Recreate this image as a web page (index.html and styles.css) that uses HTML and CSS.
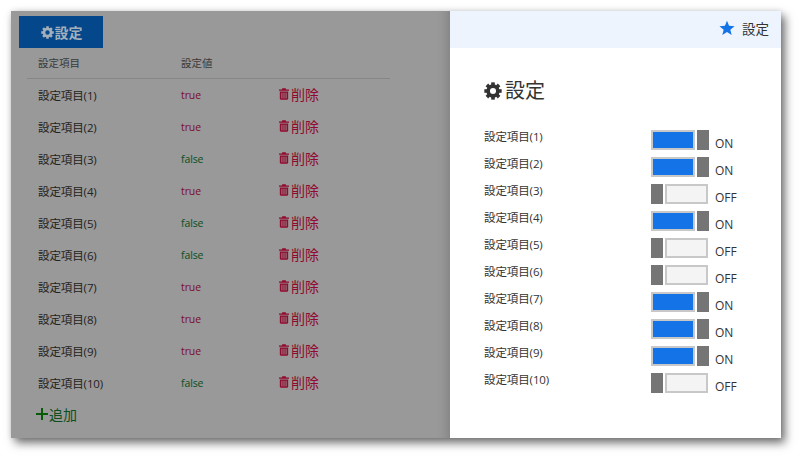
FILE: index.html
```html
<!DOCTYPE html>
<html lang="ja">
<head>
<meta charset="utf-8">
<title>設定</title>
<link rel="stylesheet" href="styles.css">
</head>
<body>
<svg class="defs" width="0" height="0" aria-hidden="true">
  <symbol id="gear" viewBox="0 0 16 16">
    <circle cx="8" cy="8" r="4.300" fill="none" stroke="currentColor" stroke-width="3.200"/>
    <g fill="currentColor">
      <rect x="6.400" y="0.300" width="3.200" height="3"/>
      <rect x="6.400" y="12.700" width="3.200" height="3"/>
      <rect x="0.300" y="6.400" width="3" height="3.200"/>
      <rect x="12.700" y="6.400" width="3" height="3.200"/>
      <rect x="6.400" y="0.300" width="3.200" height="3" transform="rotate(45 8 8)"/>
      <rect x="6.400" y="12.700" width="3.200" height="3" transform="rotate(45 8 8)"/>
      <rect x="0.300" y="6.400" width="3" height="3.200" transform="rotate(45 8 8)"/>
      <rect x="12.700" y="6.400" width="3" height="3.200" transform="rotate(45 8 8)"/>
    </g>
  </symbol>
  <symbol id="trash" viewBox="0 0 12 14">
    <path fill="currentColor" d="M4 0h4l.6 1.500H12V3H0V1.500h3.400zM1 4h10v9l-1 1H2l-1-1zM3 5.500v7h1v-7zM5.500 5.500v7h1v-7zM8 5.500v7h1v-7z"/>
  </symbol>
</svg>
<main class="window">
  <section class="list">
    <button class="open"><svg class="gear-s"><use href="#gear"/></svg>設定</button>
    <div class="thead"><span>設定項目</span><span>設定値</span></div>
    <div class="row"><span>設定項目(1)</span><span class="t">true</span><span class="del"><svg class="trash"><use href="#trash"/></svg>削除</span></div>
    <div class="row"><span>設定項目(2)</span><span class="t">true</span><span class="del"><svg class="trash"><use href="#trash"/></svg>削除</span></div>
    <div class="row"><span>設定項目(3)</span><span class="f">false</span><span class="del"><svg class="trash"><use href="#trash"/></svg>削除</span></div>
    <div class="row"><span>設定項目(4)</span><span class="t">true</span><span class="del"><svg class="trash"><use href="#trash"/></svg>削除</span></div>
    <div class="row"><span>設定項目(5)</span><span class="f">false</span><span class="del"><svg class="trash"><use href="#trash"/></svg>削除</span></div>
    <div class="row"><span>設定項目(6)</span><span class="f">false</span><span class="del"><svg class="trash"><use href="#trash"/></svg>削除</span></div>
    <div class="row"><span>設定項目(7)</span><span class="t">true</span><span class="del"><svg class="trash"><use href="#trash"/></svg>削除</span></div>
    <div class="row"><span>設定項目(8)</span><span class="t">true</span><span class="del"><svg class="trash"><use href="#trash"/></svg>削除</span></div>
    <div class="row"><span>設定項目(9)</span><span class="t">true</span><span class="del"><svg class="trash"><use href="#trash"/></svg>削除</span></div>
    <div class="row"><span>設定項目(10)</span><span class="f">false</span><span class="del"><svg class="trash"><use href="#trash"/></svg>削除</span></div>
    <div class="add"><svg class="plus" viewBox="0 0 12 12"><path fill="currentColor" d="M5 0h2v5h5v2H7v5H5V7H0V5h5z"/></svg>追加</div>
  </section>
  <aside class="panel">
    <header class="phead">
      <svg class="star" viewBox="0 0 24 24"><path fill="currentColor" d="M12 1l3.100 7.600 8.200.6-6.300 5.300 2 8-7-4.400-7 4.400 2-8L.7 9.200l8.200-.6z"/></svg>
      <span>設定</span>
    </header>
    <div class="pbody">
      <h1 class="title"><svg class="gear-l"><use href="#gear"/></svg>設定</h1>
      <div class="set"><span class="name">設定項目(1)</span><span class="sw on"><i></i><b></b></span><span class="st">ON</span></div>
      <div class="set"><span class="name">設定項目(2)</span><span class="sw on"><i></i><b></b></span><span class="st">ON</span></div>
      <div class="set"><span class="name">設定項目(3)</span><span class="sw"><b></b><i></i></span><span class="st">OFF</span></div>
      <div class="set"><span class="name">設定項目(4)</span><span class="sw on"><i></i><b></b></span><span class="st">ON</span></div>
      <div class="set"><span class="name">設定項目(5)</span><span class="sw"><b></b><i></i></span><span class="st">OFF</span></div>
      <div class="set"><span class="name">設定項目(6)</span><span class="sw"><b></b><i></i></span><span class="st">OFF</span></div>
      <div class="set"><span class="name">設定項目(7)</span><span class="sw on"><i></i><b></b></span><span class="st">ON</span></div>
      <div class="set"><span class="name">設定項目(8)</span><span class="sw on"><i></i><b></b></span><span class="st">ON</span></div>
      <div class="set"><span class="name">設定項目(9)</span><span class="sw on"><i></i><b></b></span><span class="st">ON</span></div>
      <div class="set"><span class="name">設定項目(10)</span><span class="sw"><b></b><i></i></span><span class="st">OFF</span></div>
    </div>
  </aside>
</main>
</body>
</html>
```
FILE: styles.css
```css
* { box-sizing: border-box; }
html, body { margin: 0; height: 100%; background: #fff; overflow: hidden; }
body { padding: 11px 0 0 11px; font-family: "Open Sans", "Noto Sans CJK JP", sans-serif; font-size: 11.500px; color: #333; }
.defs { position: absolute; }
.window { display: flex; width: 770px; height: 427px; background: #999; box-shadow: 4px 5px 9px rgba(0,0,0,.55), 0 0 6px rgba(0,0,0,.12); }

.list { width: 439px; padding: 5px 0 0 8px; color: #222; box-shadow: inset -14px 0 12px -12px rgba(0,0,0,.18); }
.open { display: flex; align-items: center; justify-content: center; width: 84px; height: 32px; border: 0; padding: 0 0 0 1px; background: #04478a; color: #a3afbb; font: 700 14px "Open Sans", "Noto Sans CJK JP", sans-serif; }
.gear-s { width: 13px; height: 13px; margin-right: 1px; }
.thead { display: grid; grid-template-columns: 143px 1fr; align-items: center; width: 363px; height: 31px; margin-left: 8px; padding: 0 0 1px 11px; border-bottom: 1px solid #868686; font-size: 10.500px; color: #3a3a3a; }
.row { display: grid; grid-template-columns: 143px 98px 1fr; align-items: center; height: 32px; margin-left: 19px; letter-spacing: -.1px; }
.t { color: #7a0c28; font-size: 10.500px; }
.f { color: #0a4f1e; font-size: 10.500px; }
.del { display: flex; align-items: center; padding-bottom: 2px; color: #900a2e; font-size: 14px; letter-spacing: 0; }
.trash { width: 10px; height: 12px; margin-right: 2px; }
.add { display: flex; align-items: center; height: 30px; margin: 0 0 0 17px; font-size: 14px; color: #0c5020; }
.plus { width: 12px; height: 12px; margin-right: 1px; color: #065c06; }

.panel { width: 331px; background: #fff; }
.phead { display: flex; align-items: center; justify-content: flex-end; gap: 7px; height: 37px; padding: 0 12px 3px 0; background: #edf4fd; font-size: 13.500px; }
.star { width: 16px; height: 16px; color: #1473e6; }
.pbody { padding: 25px 0 0 34px; }
.title { display: flex; align-items: center; height: 36px; margin: 0; font-size: 20px; font-weight: 400; line-height: 1; }
.gear-l { width: 18px; height: 18px; margin-right: 3px; }
.set { display: flex; align-items: flex-start; height: 27px; }
.title + .set { margin-top: 21px; }
.name { width: 167px; margin-top: -1px; font-size: 11.500px; line-height: 16px; letter-spacing: -.1px; }
.sw { display: flex; gap: 2px; width: 58px; height: 20px; }
.sw b { width: 12px; background: #757575; }
.sw i { width: 43px; border: 2px solid #c8c8c8; background: #f4f4f4; }
.sw.on i { width: 44px; background: #1473e6; }
.st { margin: 7px 0 0 6px; font-size: 12px; line-height: 14px; }
```
